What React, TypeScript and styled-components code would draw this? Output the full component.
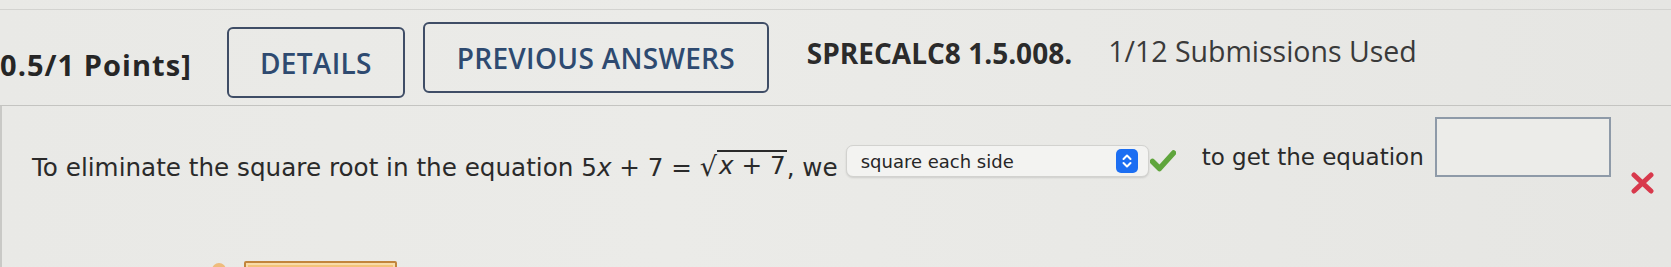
import React from 'react';
import styled, { createGlobalStyle } from 'styled-components';

const GlobalStyle = createGlobalStyle`
  html, body {
    margin: 0;
    padding: 0;
    background: #e7e7e4;
    overflow: hidden;
  }
  body {
    font-family: "Open Sans", "Noto Sans", sans-serif;
  }
`;

const Page = styled.div`
  width: 1671px;
  height: 267px;
  overflow: hidden;
  background: linear-gradient(90deg, #e9e9e6 0%, #ebebe8 40%, #e6e6e3 100%);
`;

// header strip with points, buttons and submission info
const Header = styled.div`
  margin-top: 9px;
  height: 95px;
  border-top: 1px solid #d3d3d0;
  border-bottom: 1px solid #c4c4c1;
  display: flex;
  align-items: flex-start;
`;

const HeadText = styled.span<{ $top: number; $left: number; $size: number; $weight: number; $color: string; $spacing?: number }>`
  margin-top: ${(p) => p.$top}px;
  margin-left: ${(p) => p.$left}px;
  font-size: ${(p) => p.$size}px;
  font-weight: ${(p) => p.$weight};
  color: ${(p) => p.$color};
  letter-spacing: ${(p) => p.$spacing ?? 0}px;
  line-height: 36px;
  white-space: nowrap;
`;

const TabButton = styled.div<{ $top: number; $left: number; $width: number }>`
  box-sizing: border-box;
  margin-top: ${(p) => p.$top}px;
  margin-left: ${(p) => p.$left}px;
  width: ${(p) => p.$width}px;
  height: 71px;
  border: 2px solid #3f4d66;
  border-radius: 6px;
  display: flex;
  align-items: center;
  justify-content: center;
  font-size: 28px;
  font-weight: 600;
  color: #2e4a70;
  letter-spacing: 0.3px;
`;

// question body
const Body = styled.div`
  border-left: 2px solid #c9c9c6;
  display: flex;
  flex-direction: column;
`;

const QuestionRow = styled.div`
  display: flex;
  align-items: flex-start;
  padding-left: 30px;
`;

const Prose = styled.span<{ $top: number; $left: number; $size: number }>`
  margin-top: ${(p) => p.$top}px;
  margin-left: ${(p) => p.$left}px;
  font-family: "DejaVu Sans", Verdana, sans-serif;
  font-size: ${(p) => p.$size}px;
  line-height: 34px;
  color: #2a2a2a;
  white-space: nowrap;
`;

const Var = styled.i`
  font-style: italic;
`;

const Sqrt = styled.span`
  display: inline-flex;
  align-items: flex-end;
`;

const Radical = styled.span`
  font-size: 1.1em;
  line-height: 1;
`;

const Radicand = styled.span`
  border-top: 2px solid #2a2a2a;
  line-height: 1.08;
  padding: 1px 1px 0 2px;
`;

const Select = styled.div<{ $top: number; $left: number }>`
  box-sizing: border-box;
  margin-top: ${(p) => p.$top}px;
  margin-left: ${(p) => p.$left}px;
  width: 303px;
  height: 32px;
  border: 1px solid #d2d2cf;
  border-radius: 7px;
  background: #f3f3f1;
  box-shadow: 0 1px 2px rgba(0, 0, 0, 0.12);
  display: flex;
  align-items: center;
  justify-content: space-between;
  padding: 0 10px 0 14px;
  font-family: "DejaVu Sans", Verdana, sans-serif;
  font-size: 18px;
  color: #262626;
`;

const Mark = styled.span<{ $top: number; $left: number }>`
  margin-top: ${(p) => p.$top}px;
  margin-left: ${(p) => p.$left}px;
  display: flex;
`;

const AnswerBox = styled.div<{ $top: number; $left: number }>`
  box-sizing: border-box;
  margin-top: ${(p) => p.$top}px;
  margin-left: ${(p) => p.$left}px;
  width: 176px;
  height: 60px;
  border: 2px solid #8e9aa8;
  background: #ecece9;
`;

const ActionRow = styled.div`
  display: flex;
  align-items: flex-start;
  margin-top: 67px;
  padding-left: 210px;
`;

const Blob = styled.span`
  width: 14px;
  height: 14px;
  margin-top: 2px;
  border-radius: 50%;
  background: #f0b062;
  opacity: 0.8;
`;

const SubmitButton = styled.div`
  box-sizing: border-box;
  margin-left: 18px;
  width: 153px;
  height: 40px;
  border: 2px solid #c2853c;
  border-radius: 2px;
  background: linear-gradient(180deg, #f3c27a 0%, #f6c86a 100%);
  box-shadow: inset 0 0 0 2px #f8dca8;
`;

const Stepper = () => (
  <svg width="22" height="24" viewBox="0 0 22 24">
    <rect x="0" y="0" width="22" height="24" rx="5" fill="#1c6ef2" />
    <path d="M7.5 10 L11 6.5 L14.5 10" fill="none" stroke="#fff" strokeWidth="2" strokeLinecap="round" strokeLinejoin="round" />
    <path d="M7.5 14 L11 17.5 L14.5 14" fill="none" stroke="#fff" strokeWidth="2" strokeLinecap="round" strokeLinejoin="round" />
  </svg>
);

const Check = () => (
  <svg width="26" height="24" viewBox="0 0 26 24">
    <path d="M2.5 12.5 L9.5 19.5 L23.5 4" fill="none" stroke="#5fa53c" strokeWidth="5.5" strokeLinecap="round" strokeLinejoin="round" />
  </svg>
);

const Cross = () => (
  <svg width="25" height="22" viewBox="0 0 25 22">
    <path d="M4 3 L21 19 M21 3 L4 19" fill="none" stroke="#d8394c" strokeWidth="5" strokeLinecap="round" />
  </svg>
);

export default function App() {
  return (
    <>
      <GlobalStyle />
      <Page>
        <Header>
          <HeadText $top={37} $left={0} $size={29} $weight={700} $color="#262626" $spacing={1.05}>
            0.5/1 Points]
          </HeadText>
          <TabButton $top={17} $left={35} $width={178}>DETAILS</TabButton>
          <TabButton $top={12} $left={18} $width={346}>PREVIOUS ANSWERS</TabButton>
          <HeadText $top={25} $left={38} $size={28} $weight={700} $color="#2b2b2b">
            SPRECALC8 1.5.008.
          </HeadText>
          <HeadText $top={23} $left={36} $size={28.5} $weight={400} $color="#3a3a3a">
            1/12 Submissions Used
          </HeadText>
        </Header>
        <Body>
          <QuestionRow>
            <Prose $top={44} $left={0} $size={24.65}>
              To eliminate the square root in the equation 5<Var>x</Var> + 7 ={' '}
              <Sqrt>
                <Radical>√</Radical>
                <Radicand>
                  <Var>x</Var> + 7
                </Radicand>
              </Sqrt>
              , we
            </Prose>
            <Select $top={39} $left={8}>
              <span>square each side</span>
              <Stepper />
            </Select>
            <Mark $top={43} $left={1}>
              <Check />
            </Mark>
            <Prose $top={34} $left={26} $size={23}>
              to get the equation
            </Prose>
            <AnswerBox $top={11} $left={11} />
            <Mark $top={66} $left={19}>
              <Cross />
            </Mark>
          </QuestionRow>
          <ActionRow>
            <Blob />
            <SubmitButton />
          </ActionRow>
        </Body>
      </Page>
    </>
  );
}
